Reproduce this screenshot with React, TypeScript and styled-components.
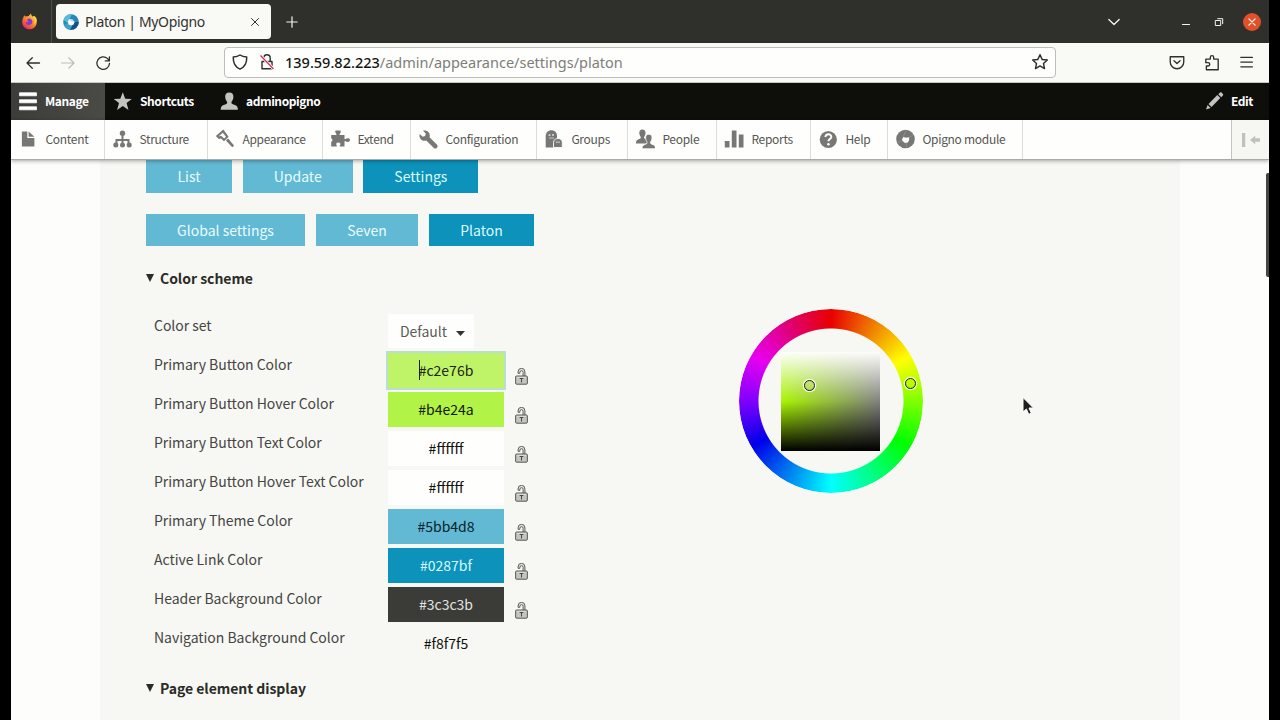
import React from "react";
import styled, { createGlobalStyle } from "styled-components";

const pageFont = `"Noto Sans CJK SC", "Noto Sans", sans-serif`;
const chromeFont = `"Noto Sans", "Open Sans", sans-serif`;

const GlobalStyle = createGlobalStyle`
  * { box-sizing: border-box; }
  body { margin: 0; background: #000; overflow: hidden; }
`;

const Screen = styled.div`
  position: relative;
  width: 1258px;
  height: 720px;
  margin-left: 11px;
  display: flex;
  flex-direction: column;
  overflow: hidden;
  background: #fdfefb;
  font-family: ${pageFont};
`;

const TabBar = styled.div`
  flex: none;
  height: 43px;
  background: #2f2f2c;
  display: flex;
  align-items: center;
  color: #f4f4f0;
  font-family: ${chromeFont};
`;

const FirefoxSlot = styled.div`
  width: 41px;
  height: 43px;
  border-right: 1px solid #4c4c49;
  padding: 0 0 1px 10px;
  display: flex;
  align-items: center;
`;

const Tab = styled.div`
  width: 215px;
  height: 35px;
  margin-left: 4px;
  padding: 0 8px 0 7px;
  border-radius: 4px;
  background: #f9f9f6;
  color: #32322f;
  display: flex;
  align-items: center;
  gap: 6px;
`;

const TabTitle = styled.span`
  flex: 1;
  font-size: 14px;
  letter-spacing: -0.35px;
  line-height: 20px;
  white-space: nowrap;
`;

const NewTab = styled.div`
  display: flex;
  margin-left: 13px;
`;

const WindowControls = styled.div`
  margin-left: auto;
  display: flex;
  align-items: center;
`;

const ControlSlot = styled.div<{ $w: number }>`
  width: ${(p) => p.$w}px;
  height: 20px;
  display: flex;
  align-items: center;
  justify-content: center;
`;

const CloseButton = styled.div`
  width: 18px;
  height: 18px;
  margin: 0 8px 0 7px;
  border-radius: 50%;
  background: #e0512a;
  display: flex;
  align-items: center;
  justify-content: center;
`;

const NavBar = styled.div`
  flex: none;
  height: 40px;
  background: #f9f9f6;
  border-bottom: 1px solid #c8c8c5;
  display: flex;
  align-items: center;
  color: #2e2e2b;
`;

const NavButtons = styled.div`
  width: 213px;
  padding-left: 14px;
  display: flex;
  gap: 19px;
`;

const AddressBar = styled.div`
  width: 832px;
  height: 31px;
  border: 1px solid #bdbdb9;
  border-radius: 4px;
  background: #fefffc;
  display: flex;
  align-items: center;
  padding: 0 6px 1px 6px;
  gap: 9px;
`;

const Url = styled.span`
  flex: 1;
  font-family: ${chromeFont};
  font-size: 14.5px;
  line-height: 20px;
  white-space: nowrap;
  color: #7d7d79;
`;

const UrlHost = styled.span`
  color: #141412;
  font-weight: 500;
`;

const NavTools = styled.div`
  margin-left: auto;
  padding-right: 13px;
  display: flex;
  gap: 17px;
`;

const AdminBar = styled.div`
  flex: none;
  height: 37px;
  background: #0e0f0b;
  display: flex;
`;

const AdminTab = styled.div<{ $w: number; $gap?: number; $active?: boolean; $end?: boolean }>`
  width: ${(p) => p.$w}px;
  margin-left: ${(p) => (p.$end ? "auto" : 0)};
  padding: 0 0 1px 7px;
  display: flex;
  align-items: center;
  gap: ${(p) => p.$gap ?? 7}px;
  color: #fff;
  font-size: 12px;
  letter-spacing: -0.42px;
  font-weight: 700;
  line-height: 18px;
  white-space: nowrap;
  background: ${(p) => (p.$active ? "linear-gradient(90deg, #3c3c39, #4a4a47)" : "none")};
`;

const Tray = styled.div`
  flex: none;
  position: relative;
  z-index: 1;
  height: 40px;
  background: #fefffc;
  border-bottom: 1px solid #a9a9a6;
  box-shadow: 0 1px 4px rgba(0, 0, 0, 0.35);
  display: flex;
`;

const TrayItem = styled.div<{ $w: number }>`
  width: ${(p) => p.$w}px;
  border-right: 1px solid #dcdcd9;
  padding: 0 0 1px 7.4px;
  display: flex;
  align-items: center;
  gap: 7px;
  color: #565653;
  font-size: 12px;
  letter-spacing: -0.3px;
  line-height: 18px;
  white-space: nowrap;
`;

const TrayToggle = styled.div`
  width: 38px;
  margin-left: auto;
  border-left: 1px solid #c4c4c1;
  background: #f6f6f3;
  display: flex;
  align-items: center;
  padding-left: 9px;
`;

const Main = styled.main`
  flex: 1;
  width: 1080px;
  margin-left: 89px;
  padding-left: 46px;
  background: #f7f8f4;
`;

const TabRow = styled.nav<{ $gap: number }>`
  display: flex;
  gap: ${(p) => p.$gap}px;
  margin-bottom: 21px;
`;

const PageTab = styled.a<{ $w: number; $h: number; $active?: boolean }>`
  width: ${(p) => p.$w}px;
  height: ${(p) => p.$h}px;
  padding-bottom: 1px;
  display: flex;
  align-items: center;
  justify-content: center;
  background: ${(p) => (p.$active ? "#0d92bb" : "#62b9d3")};
  color: ${(p) => (p.$active ? "#dcfbff" : "#e9fdff")};
  font-size: 14px;
  line-height: 20px;
`;

const Summary = styled.h2`
  margin: 0;
  height: 20px;
  display: flex;
  align-items: center;
  gap: 6px;
  font-size: 14px;
  letter-spacing: -0.04px;
  font-weight: 700;
  color: #2b2b28;
`;

const Triangle = styled.i`
  border: 4px solid transparent;
  border-top: 8px solid #2b2b28;
  border-bottom: 0;
`;

const SchemePanel = styled.section`
  display: flex;
  margin: 26px 0 13px;
`;

const Fieldsets = styled.div`
  padding-top: 1px;
`;

const Fields = styled.div`
  width: 592.5px;
  padding-left: 8px;
`;

const FieldRow = styled.div`
  height: 39px;
  display: flex;
  align-items: flex-start;
`;

const Label = styled.label`
  width: 234px;
  padding-top: 1px;
  font-size: 14px;
  letter-spacing: -0.03px;
  line-height: 20px;
  color: #454542;
  white-space: nowrap;
`;

const SelectBox = styled.div`
  width: 86px;
  height: 34px;
  background: #fefffc;
  display: flex;
  align-items: center;
  padding: 0 0 1px 12px;
  gap: 9px;
  font-size: 14px;
  letter-spacing: -0.05px;
  color: #5b5b58;
`;

const SelectArrow = styled.svg`
  margin-top: 6px;
`;

const ColorInput = styled.div<{ $bg: string; $fg: string; $focus?: boolean }>`
  width: 116px;
  height: 35px;
  padding-bottom: 2px;
  background: ${(p) => p.$bg};
  color: ${(p) => p.$fg};
  outline: ${(p) => (p.$focus ? "2px solid #b9dfd3" : "none")};
  display: flex;
  align-items: center;
  justify-content: center;
  font-size: 14px;
  line-height: 20px;
`;

const Caret = styled.i`
  width: 1px;
  height: 20px;
  margin-right: -1px;
  background: #1c2410;
`;

const LockSlot = styled.div`
  padding: 15px 0 0 11px;
  display: flex;
`;

const Wheel = styled.div`
  position: relative;
  width: 184px;
  height: 184px;
  margin-top: -5px;
  display: flex;
  align-items: center;
  justify-content: center;
`;

const HueRing = styled.div`
  position: absolute;
  inset: 0;
  border-radius: 50%;
  background: conic-gradient(
    #e80000, #f08000 30deg, #ffff00 60deg, #80ff00 90deg, #00ff00 120deg, #00ff80 150deg,
    #00ffff 180deg, #0080f0 210deg, #0000e8 240deg, #8000ff 270deg, #e800f0 300deg, #e00078 330deg, #e80000
  );
  mask: radial-gradient(circle closest-side, transparent 72px, #000 73px);
`;

const Shades = styled.div`
  position: relative;
  width: 99px;
  height: 99px;
  background: linear-gradient(#fdfdfb, #808080 50%, #000);
  &::before {
    content: "";
    position: absolute;
    inset: 0;
    background: linear-gradient(#fdfefb, #a8f400 50%, #000);
    mask: linear-gradient(90deg, #000, transparent);
  }
`;

const Marker = styled.i<{ $x: number; $y: number }>`
  position: absolute;
  left: ${(p) => p.$x}px;
  top: ${(p) => p.$y}px;
  width: 11px;
  height: 11px;
  margin: -5.5px 0 0 -5.5px;
  border: 1.5px solid #222;
  border-radius: 50%;
  box-shadow: 0 0 0 1.3px rgba(255, 255, 255, 0.85);
`;

const Pointer = styled.svg`
  position: absolute;
  left: 1010px;
  top: 396px;
`;

const ScrollThumb = styled.div`
  position: absolute;
  right: 0;
  top: 173px;
  width: 3px;
  height: 104px;
  border-radius: 2px 0 0 2px;
  background: #454542;
`;

type StrokeProps = { d: string; w?: number; h?: number; sw?: number; color?: string; box?: string };

const Stroke = ({ d, w = 16, h = 16, sw = 1.3, color = "currentColor", box = "0 0 16 16" }: StrokeProps) => (
  <svg width={w} height={h} viewBox={box} fill="none" stroke={color} strokeWidth={sw} strokeLinecap="round" strokeLinejoin="round">
    <path d={d} />
  </svg>
);

const Solid = ({ children, color = "#777774", w = 20, h = 20 }: { children: React.ReactNode; color?: string; w?: number; h?: number }) => (
  <svg width={w} height={h} viewBox="0 0 20 20" fill={color}>
    {children}
  </svg>
);

const FirefoxLogo = () => (
  <svg width="17" height="17" viewBox="0 0 18 18">
    <defs>
      <linearGradient id="fx" x1="0.85" y1="0.1" x2="0.2" y2="0.95">
        <stop offset="0" stopColor="#ffd84a" />
        <stop offset="0.45" stopColor="#ff8a2a" />
        <stop offset="1" stopColor="#e8265e" />
      </linearGradient>
    </defs>
    <path fill="url(#fx)" d="M2.6 4.2C2.8 3.5 3.2 2.9 3.8 2.4c.1.6.3 1 .7 1.4 1-.5 2-.6 3-.3 1-.4 1.6-1.6 3-3 .1 1.8 1.2 2.6 2.3 3.7.4-.3.4-.8.3-1.3 2.4 1.7 3.6 4 3.6 6.6 0 4.500-3.500 7.800-7.800 7.800S1.200 14 1.200 9.600c0-2 .5-3.800 1.400-5.400z" />
    <path fill="#7a3bd8" d="M6.800 6.300c1.300-.8 3-.7 4 .2 1.400 1.200 1.600 3 .9 4.400-1 1.700-3 2.200-4.700 1.500-1.400-.6-2-1.700-1.900-3 1 .6 2 .5 3-.3-1.200-.2-1.800-.8-1.300-1.600.2-.4.300-.8 0-1.200z" />
    <path fill="#ffcf3e" d="M10.500.5c.1 3 3.600 3.700 4 7.500.2 2-.6 3.500-1.600 4.300 3.200-1 4.200-3.900 3.500-6.400-.5-1.400-1.600-2.500-3.300-3 .1.500.1 1-.3 1.300C11.700 3.100 10.600 2.300 10.500.5z" />
  </svg>
);

const SiteIcon = () => (
  <svg width="16" height="16" viewBox="0 0 16 16">
    <circle cx="8" cy="8" r="7.800" fill="#2a86b8" />
    <path d="M.6 6A7.800 7.800 0 0 1 9 .3L6.500 5 4.600 9z" fill="#54bcd8" />
    <path d="M15.800 8a7.800 7.800 0 0 1-9 7.700L9 12l3-4z" fill="#174f86" />
    <path d="M1 11a7.800 7.800 0 0 0 6 4.700L9 12 4.600 9z" fill="#3aa3c8" />
    <path d="M4.800 7.700 6.200 5l3 .3 2.400 2.700-1 2.600-2.500 1-2.500-1z" fill="#f4fbfd" />
    <path d="M6.200 5l3 .3 1 2.500-2-.8z" fill="#9fd6e6" />
  </svg>
);

const Lock = () => (
  <svg width="13" height="17" viewBox="0 0 14 17" preserveAspectRatio="none">
    <path d="M3.300 5.300V4A3.700 3.700 0 0 1 10.700 4v5H8.700V4.300a1.700 1.700 0 0 0-3.400 0v1z" fill="#e9e9e6" stroke="#555552" strokeWidth="1" />
    <rect x="0.700" y="8" width="12.600" height="8.200" rx="1" fill="#c4c4c1" stroke="#50504d" />
    <path d="M5 10.500h4M7 10.500v4" stroke="#4a4a47" strokeWidth="1.100" />
    <path d="M2 9.300h10" stroke="#ededea" strokeWidth="0.700" />
  </svg>
);

const Bust = ({ transform }: { transform?: string }) => (
  <path
    transform={transform}
    d="M10 1c3 0 4.300 2 4.100 4.800-.1 1.800-1 3.300-1.700 4.200-.4.600-.4 1.800.3 2.200 1.500.900 4.600 1.400 5.400 3.200.4.900.5 2 .5 2.900H1.400c0-.9.100-2 .5-2.900.8-1.800 3.900-2.300 5.400-3.200.7-.4.700-1.600.3-2.200C6.900 9.100 6 7.600 5.900 5.800 5.700 3 7 1 10 1z"
  />
);

const trayItems: { label: string; w: number; icon: React.ReactNode }[] = [
  {
    label: "Content",
    w: 94,
    icon: <path d="M3.900 2.600h5.400v6.300h7.100v8.600H3.900zM10.600 2.600l5.800 5.200h-5.800z" />,
  },
  {
    label: "Structure",
    w: 103,
    icon: (
      <>
        <circle cx="10.500" cy="4.300" r="2.700" />
        <path d="M9.500 6h2v4h6v5h-2v-3h-4v3h-2v-3h-4v3h-2v-5h6z" />
        <circle cx="3.800" cy="16" r="2.500" />
        <circle cx="10.500" cy="16" r="2.500" />
        <circle cx="17.200" cy="16" r="2.500" />
      </>
    ),
  },
  {
    label: "Appearance",
    w: 115,
    icon: (
      <>
        <path fillRule="evenodd" d="M.8 7 8.300.5l5.300 7.200-4.600 4.600-3-2.900-2.200.5zM7.800 3.800l-4.300 3.700 2.600-.7 3 2.800 1.900-1.800z" />
        <path d="M10.900 11.400l2.200-2 5.500 6.700c.8 1.200-1 2.700-2.100 1.500z" />
      </>
    ),
  },
  {
    label: "Extend",
    w: 88,
    icon: (
      <path d="M1.200 6h4.700c.6 0 .8-.5.400-1C5 3.500 4.800 1.500 6 1.500h4c1.200 0 1 2-.3 3.500-.4.500-.2 1 .4 1h4.400v3.600c0 .6.500.8 1 .4 1.500-1.300 4.500-1.200 4.500 1.100s-3 2.400-4.500 1.100c-.5-.4-1-.2-1 .4v5h-4.200c-.6 0-.7-.5-.4-1 1-1.500.7-3-1.600-3s-2.600 1.500-1.600 3c.3.500.2 1-.4 1H1.200v-4.500c0-.6.500-.7 1-.4V9.500c-.5.300-1 .2-1-.4z" />
    ),
  },
  {
    label: "Configuration",
    w: 126,
    icon: (
      <g transform="translate(1.500 1.500) scale(1.140)">
        <path d="M15.400 12.600l-6.600-6.700c.15-.45.250-.920.250-1.420C9.050 2 7 0 4.500 0c-.5 0-1 .1-1.430.255l2.430 2.430-.590 2.200-2.200.588L.270 3.030C.110 3.500 0 4 0 4.500 0 7 2 9 4.500 9c.5 0 .970-.1 1.420-.250l6.670 6.660c2 1.600 4.400-1.200 2.800-2.810z" />
      </g>
    ),
  },
  {
    label: "Groups",
    w: 91,
    icon: (
      <>
        <path d="M1.700 18.500V7.200C1.700 3.500 4 1.300 7.400 1.300S13 3.500 13 7.200v11.300z" />
        <circle cx="5.500" cy="6" r="1.100" fill="#d8d8d5" />
        <circle cx="9" cy="6" r="1.100" fill="#d8d8d5" />
        <path d="M5 8.500h5v1H5z" fill="#c8c8c5" />
        <path d="M9.500 18.500v-5c0-2.500 1.800-4 4.400-4s4.400 1.500 4.400 4v5z" stroke="#fefffc" strokeWidth="0.900" />
        <path d="M11.800 12.600h4.200v1h-4.200z" fill="#d8d8d5" />
      </>
    ),
  },
  {
    label: "People",
    w: 89,
    icon: (
      <>
        <Bust transform="translate(-.2 -.4) scale(.76 .82)" />
        <g stroke="#fefffc" strokeWidth="1">
          <Bust transform="translate(6 4.400) scale(.78 .84)" />
        </g>
      </>
    ),
  },
  {
    label: "Reports",
    w: 94,
    icon: <path d="M.8 12h4.700v6.500H.8zM7.800 1.500h4.700v17H7.800zM14.800 5.500h4.700v13h-4.700z" />,
  },
  {
    label: "Help",
    w: 77,
    icon: (
      <>
        <circle cx="10.300" cy="10.500" r="8.600" />
        <path d="M7.400 8c0-3.800 6-3.500 5.900-.1 0 2-2.800 2.200-2.900 4.300" fill="none" stroke="#fefffc" strokeWidth="2" />
        <circle cx="10.400" cy="15.200" r="1.300" fill="#fefffc" />
      </>
    ),
  },
  {
    label: "Opigno module",
    w: 135,
    icon: (
      <>
        <circle cx="10.500" cy="10" r="9.300" />
        <path d="M7 10.500 8.300 8l3 .8 2.700-.5.200 2.800-1.400 2.500-2.800.3L7.500 12z" fill="#fefffc" />
        <path d="M8 8 11 1.500M14 9l4-3M7 11.500 2 14M11 14l1 5" stroke="#92928f" strokeWidth="0.800" />
      </>
    ),
  },
];

const primaryTabs = [
  { label: "List", w: 86 },
  { label: "Update", w: 110 },
  { label: "Settings", w: 115, active: true },
];

const secondaryTabs = [
  { label: "Global settings", w: 159 },
  { label: "Seven", w: 102 },
  { label: "Platon", w: 105, active: true },
];

const colors = [
  { label: "Primary Button Color", value: "#c2e76b", bg: "#bff368", fg: "#1c2410", focus: true },
  { label: "Primary Button Hover Color", value: "#b4e24a", bg: "#b1f347", fg: "#111a05" },
  { label: "Primary Button Text Color", value: "#ffffff", bg: "#fefffc", fg: "#111110" },
  { label: "Primary Button Hover Text Color", value: "#ffffff", bg: "#fefffc", fg: "#111110" },
  { label: "Primary Theme Color", value: "#5bb4d8", bg: "#62b9d3", fg: "#06222b" },
  { label: "Active Link Color", value: "#0287bf", bg: "#0d92bb", fg: "#d5fbff" },
  { label: "Header Background Color", value: "#3c3c3b", bg: "#3b3b38", fg: "#e3e3e0" },
  { label: "Navigation Background Color", value: "#f8f7f5", bg: "#f7f8f4", fg: "#111110", unlocked: true },
];

export default function App() {
  return (
    <>
      <GlobalStyle />
      <Screen>
        <TabBar>
          <FirefoxSlot><FirefoxLogo /></FirefoxSlot>
          <Tab>
            <SiteIcon />
            <TabTitle>Platon | MyOpigno</TabTitle>
            <Stroke d="M4.500 4.500l7 7M11.500 4.500l-7 7" sw={1} />
          </Tab>
          <NewTab><Stroke d="M8 2.800v10.400M2.800 8h10.400" sw={1.2} /></NewTab>
          <WindowControls>
            <ControlSlot $w={20}><Stroke d="M2.800 5.500l5.200 5 5.200-5" sw={1.3} /></ControlSlot>
            <ControlSlot $w={52} />
            <ControlSlot $w={20}><Stroke d="M4.500 10.500h7" sw={1.2} /></ControlSlot>
            <ControlSlot $w={12} />
            <ControlSlot $w={22}><Stroke d="M4.700 6.500h5v5h-5zM6.700 4.700h5v5" sw={1} /></ControlSlot>
            <ControlSlot $w={6} />
            <CloseButton><Stroke d="M4.900 4.900l6.200 6.200M11.100 4.900l-6.200 6.200" sw={1.3} /></CloseButton>
          </WindowControls>
        </TabBar>

        <NavBar>
          <NavButtons>
            <Stroke d="M14.500 8H2M7.300 2.800L2 8l5.300 5.200" sw={1.3} />
            <Stroke d="M1.500 8H14M8.700 2.800L14 8l-5.300 5.200" color="#bcbcb9" sw={1.2} />
            <Stroke d="M14.500 8.300a6.300 6.300 0 1 1-1.900-4.700l1.200 1.600M14.400 1.800v4.100h-4.100" sw={1.3} />
          </NavButtons>
          <AddressBar>
            <Stroke w={18} h={18} d="M8 1.800c2 1.500 4 1.700 6 1.800.2 5-1.500 8.800-6 10.800C3.500 12.400 1.800 8.600 2 3.600c2-.1 4-.3 6-1.800z" />
            <svg width="18" height="18" viewBox="0 0 18 18" fill="none" stroke="#2e2e2b" strokeWidth="1.400">
              <path d="M4 8.500h10v7.300H4zM5.800 8.500V5a3.200 3.200 0 0 1 6.400 0v3.500" strokeLinejoin="round" />
              <path d="M2.500 2.500l13 13.500" stroke="#fefffc" strokeWidth="3" />
              <path d="M2.500 2.500l13 13.500" stroke="#d0305c" strokeWidth="1.300" />
            </svg>
            <Url><UrlHost>139.59.82.223</UrlHost>/admin/appearance/settings/platon</Url>
            <Stroke w={18} h={18} d="M8 1.500l1.900 4.200 4.600.5-3.400 3.100.9 4.500L8 11.500l-4 2.300.9-4.500L1.500 6.200l4.600-.5z" />
          </AddressBar>
          <NavTools>
            <Stroke w={18} h={18} d="M2 2.400h12v4.700a6 6 0 0 1-12 0zM5.300 6L8 8.500 10.700 6" sw={1.2} />
            <Stroke w={18} h={18} d="M2.500 4.500h4V3a1.500 1.500 0 0 1 3 0v1.500h4v9.500H3v-3.300h1.500a1.500 1.500 0 0 0 0-3H2.500z" sw={1.2} />
            <Stroke w={18} h={18} d="M2.500 3h10.300M2.500 7.200h10.300M2.500 11.400h10.300" sw={1.1} />
          </NavTools>
        </NavBar>

        <AdminBar>
          <AdminTab $w={94} $active>
            <Solid color="#fff">
              <path d="M1.500 1.800h17v3h-17zM1.500 8.800h17v3h-17zM1.500 15.800h17v3h-17z" stroke="#fff" strokeLinejoin="round" strokeWidth="0.800" />
            </Solid>
            Manage
          </AdminTab>
          <AdminTab $w={107} $gap={8}>
            <Solid color="#c3c3c0"><path d="M10.800 1.300l2.400 6.500 6.600.2-5.200 4.100 1.900 6.900-5.700-3.900-5.700 3.900 1.900-6.900-5.300-4.100 6.600-.2z" /></Solid>
            Shortcuts
          </AdminTab>
          <AdminTab $w={130}>
            <Solid color="#c3c3c0"><Bust transform="translate(.3 .5)" /></Solid>
            adminopigno
          </AdminTab>
          <AdminTab $w={72} $end>
            <Solid color="#c3c3c0">
              <path d="M14.300 3.200 16 1.600c.5-.5 1-.5 1.500 0l1.400 1.500c.5.5.5 1 0 1.500l-1.700 1.600zM13.300 4.100l3 3-8.800 8.900-3-3zM3.600 13.900l3 3L2 18.500z" />
            </Solid>
            Edit
          </AdminTab>
        </AdminBar>

        <Tray>
          {trayItems.map((item) => (
            <TrayItem key={item.label} $w={item.w}>
              <Solid>{item.icon}</Solid>
              {item.label}
            </TrayItem>
          ))}
          <TrayToggle>
            <Solid color="#c0c0bd"><path d="M1 3h3.200v14H1zM9 10l5.200-4.200v2.500H19v3.400h-4.800v2.500z" /></Solid>
          </TrayToggle>
        </Tray>

        <Main>
          <TabRow $gap={10.7}>
            {primaryTabs.map((t) => (
              <PageTab key={t.label} $w={t.w} $h={33} $active={t.active}>{t.label}</PageTab>
            ))}
          </TabRow>
          <TabRow $gap={11}>
            {secondaryTabs.map((t) => (
              <PageTab key={t.label} $w={t.w} $h={32} $active={t.active}>{t.label}</PageTab>
            ))}
          </TabRow>
          <Fieldsets>
            <Summary><Triangle />Color scheme</Summary>
            <SchemePanel>
              <Fields>
                <FieldRow>
                  <Label>Color set</Label>
                  <SelectBox>
                    Default
                    <SelectArrow width="9" height="5" viewBox="0 0 9 5"><path d="M0 0h9L4.500 5z" fill="#333330" /></SelectArrow>
                  </SelectBox>
                </FieldRow>
                {colors.map((c) => (
                  <FieldRow key={c.label}>
                    <Label>{c.label}</Label>
                    <ColorInput $bg={c.bg} $fg={c.fg} $focus={c.focus}>
                      {c.focus && <Caret />}
                      {c.value}
                    </ColorInput>
                    {!c.unlocked && <LockSlot><Lock /></LockSlot>}
                  </FieldRow>
                ))}
              </Fields>
              <Wheel>
                <HueRing />
                <Shades />
                <Marker $x={70.5} $y={76.5} />
                <Marker $x={172} $y={74.5} />
              </Wheel>
            </SchemePanel>
            <Summary><Triangle />Page element display</Summary>
          </Fieldsets>
        </Main>

        <ScrollThumb />
        <Pointer width="16" height="22" viewBox="0 0 16 22">
          <path d="M2 1.500v14.500l3.400-3 2.300 5.300 2.600-1.100-2.300-5.200h4.500z" fill="#1f1f1d" stroke="#fff" strokeWidth="1" />
        </Pointer>
      </Screen>
    </>
  );
}
